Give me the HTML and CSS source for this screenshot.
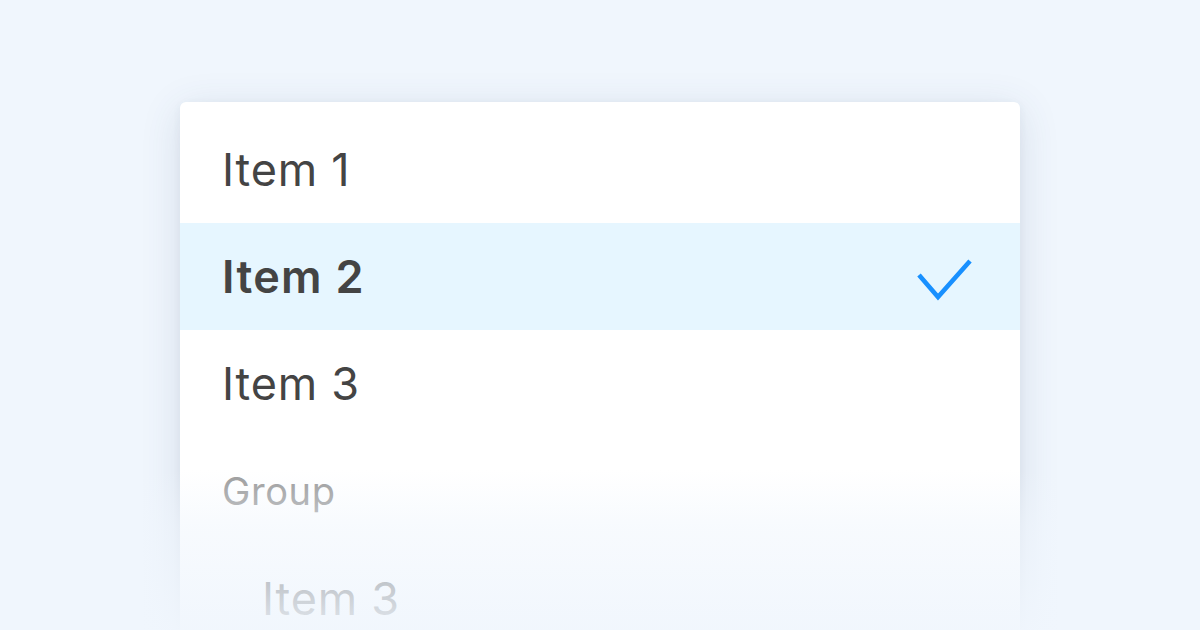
FILE: index.html
```html
<!DOCTYPE html>
<html lang="en">
<head>
<meta charset="utf-8">
<title>Dropdown</title>
<link rel="stylesheet" href="styles.css">
</head>
<body>
<div class="stage">
  <div class="menu">
    <div class="item">Item 1</div>
    <div class="item selected">
      <span>Item 2</span>
      <svg class="check" width="60" height="50" viewBox="0 0 60 50"><path d="M3 19 L22 41 L54 5" fill="none" stroke="#1890ff" stroke-width="4.6" stroke-linejoin="miter"/></svg>
    </div>
    <div class="item">Item 3</div>
    <div class="group">Group</div>
    <div class="item sub">Item 3</div>
  </div>
  <div class="fade"></div>
</div>
</body>
</html>
```

FILE: styles.css
```css
html, body {
  margin: 0;
  padding: 0;
}
body {
  width: 1200px;
  height: 630px;
  overflow: hidden;
  background: #f0f6fd;
  font-family: Inter, "Liberation Sans", sans-serif;
}
.stage {
  position: relative;
  width: 1200px;
  height: 630px;
  padding-top: 102px;
  box-sizing: border-box;
}
.menu {
  width: 840px;
  margin: 0 auto;
  background: #fff;
  border-radius: 6px;
  padding-top: 14px;
  box-shadow: 0 8px 40px rgba(60, 80, 110, 0.14), 0 2px 8px rgba(60, 80, 110, 0.06);
}
.item {
  height: 107px;
  display: flex;
  align-items: center;
  justify-content: space-between;
  padding: 0 44px 0 42px;
  font-size: 45px;
  color: #444;
  letter-spacing: 0.8px;
}
.item.selected {
  background: #e6f6ff;
  font-weight: 600;
  letter-spacing: 1.3px;
}
.check {
  display: block;
  margin-top: 8px;
}
.group {
  height: 108px;
  display: flex;
  align-items: center;
  padding-left: 42px;
  font-size: 38px;
  color: #9b9b9b;
  letter-spacing: 0.6px;
}
.item.sub {
  padding-left: 82px;
}
.fade {
  position: absolute;
  left: 0;
  right: 0;
  top: 470px;
  height: 160px;
  background: linear-gradient(to bottom, rgba(240, 246, 253, 0), rgba(240, 246, 253, 0.5) 35%, rgba(240, 246, 253, 0.92));
}
```
